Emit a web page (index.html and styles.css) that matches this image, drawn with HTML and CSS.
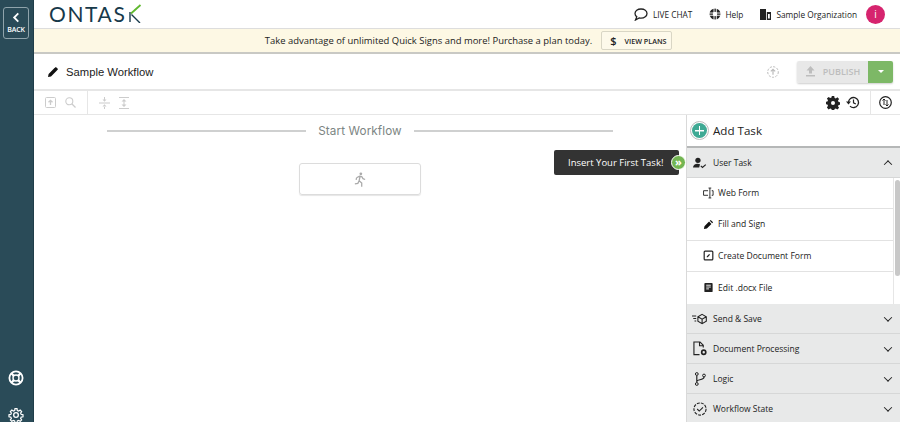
FILE: index.html
```html
<!DOCTYPE html>
<html lang="en">
<head>
<meta charset="utf-8">
<title>Ontask Workflow</title>
<link rel="stylesheet" href="styles.css">
</head>
<body>
<div class="app">
  <aside class="sidebar">
    <a class="back">
      <svg width="10" height="11" viewBox="0 0 10 12"><path d="M7.500 1.500 3 6l4.500 4.500" fill="none" stroke="#fff" stroke-width="2"/></svg>
      <span>BACK</span>
    </a>
    <div class="side-bottom">
      <svg width="16" height="16" viewBox="0 0 16 16"><circle cx="8" cy="8" r="6.600" fill="none" stroke="#fff" stroke-width="1.800"/><circle cx="8" cy="8" r="3" fill="none" stroke="#fff" stroke-width="1.400"/><path d="M3.300 3.300 5.900 5.900M12.700 3.300 10.100 5.900M3.300 12.700 5.900 10.100M12.700 12.700 10.100 10.100" stroke="#fff" stroke-width="2.200"/></svg>
      <svg width="16" height="16" viewBox="0 0 24 24"><circle cx="12" cy="12" r="3.500" fill="none" stroke="#fff" stroke-width="2"/><path d="M10.300 1.500h3.400l.5 3 2.200 1 2.600-1.700 2.400 2.400-1.700 2.600 1 2.200 3 .5v3.400l-3 .5-1 2.200 1.700 2.600-2.400 2.400-2.600-1.700-2.200 1-.5 3h-3.400l-.5-3-2.200-1-2.600 1.700-2.400-2.400 1.700-2.600-1-2.200-3-.5v-3.400l3-.5 1-2.200-1.700-2.600 2.400-2.400 2.600 1.700 2.200-1Z" fill="none" stroke="#fff" stroke-width="2" transform="translate(1.200 1.200) scale(.9)"/></svg>
    </div>
  </aside>
  <div class="main">
    <header class="topbar">
      <div class="logo"><span class="logo-text">ONTAS</span><svg class="logo-k" width="14" height="19" viewBox="0 0 14 19"><path d="M1 8v10M2.500 10.500 11 19" fill="none" stroke="#17394a" stroke-width="1.400"/><path d="M2 9.500 11.500 1" fill="none" stroke="#5fb82e" stroke-width="1.800"/></svg></div>
      <nav class="top-nav">
        <span class="nav-item">
          <svg width="14" height="13" viewBox="0 0 14 13"><path d="M7 1C3.600 1 1 3 1 5.500c0 1.300.7 2.400 1.800 3.200L1.500 12l3.700-2c.6.100 1.200.2 1.800.2 3.400 0 6-2.100 6-4.700S10.400 1 7 1Z" fill="none" stroke="#222" stroke-width="1.300"/></svg>
          LIVE CHAT</span>
        <span class="nav-item nav-help">
          <svg width="12" height="12" viewBox="0 0 12 12"><circle cx="6" cy="6" r="5.500" fill="#222"/><circle cx="6" cy="6" r="2.200" fill="#fff"/><path d="M0 4.500h12v1H0zM0 6.800h12v1H0zM4.500 0h1v12h-1zM6.800 0h1v12h-1z" fill="#fff" opacity=".9"/></svg>
          Help</span>
        <span class="nav-item nav-org">
          <svg width="11" height="11" viewBox="0 0 11 11"><path d="M0 0h6v11H0zM6.800 3H11v8H6.800z" fill="#222"/><path d="M8 5h1.800v4.500H8z" fill="#fff"/></svg>
          Sample Organization</span>
        <span class="avatar">i</span>
      </nav>
    </header>
    <div class="banner">
      <span>Take advantage of unlimited Quick Signs and more! Purchase a plan today.</span>
      <a class="plans"><span class="dollar">$</span>VIEW PLANS</a>
    </div>
    <div class="titlebar">
      <svg width="10" height="10" viewBox="0 0 10 10"><path d="M0 10l.6-3L6.500 1.100l2.400 2.400L3 9.400ZM7.200.4l.7-.4L10 2.100l-.4.700-.8.800-2.400-2.400Z" fill="#111"/></svg>
      <span class="wf-name">Sample Workflow</span>
      <svg class="wf-add" width="12" height="12" viewBox="0 0 12 12"><circle cx="6" cy="6" r="5.300" fill="none" stroke="#bbb" stroke-dasharray="2.200 1.300"/><path d="M6 3.300v5.400M3.800 5.400 6 3.300l2.200 2.100" fill="none" stroke="#bbb" stroke-width="1.200"/></svg>
      <div class="publish">
        <span class="pub-main">
          <svg width="11" height="11" viewBox="0 0 11 11"><path d="M5.500 0 9.500 4.500H7v3H4v-3H1.500ZM1 9h9v1.500H1Z" fill="#bdbdbd"/></svg>
          PUBLISH</span>
        <span class="pub-caret"></span>
      </div>
    </div>
    <div class="toolbar">
      <div class="tool-group">
        <svg width="11" height="11" viewBox="0 0 11 11"><rect x=".5" y=".5" width="10" height="10" rx="1" fill="none" stroke="#ccc"/><path d="M5.500 8V3.500M3.500 5.300l2-2 2 2" fill="none" stroke="#ccc" stroke-width="1.300"/></svg>
        <svg width="11" height="11" viewBox="0 0 11 11"><circle cx="4.300" cy="4.300" r="3.500" fill="none" stroke="#ccc" stroke-width="1.100"/><path d="M7 7l3.500 3.500" stroke="#ccc" stroke-width="1.300"/></svg>
      </div>
      <div class="tool-group tool-group2">
        <svg width="11" height="12" viewBox="0 0 11 12"><path d="M0 5.500h11v1H0zM3.500 2.500h4l-2 2.200zM5 0h1v3H5zM3.500 9.500h4l-2-2.200zM5 9h1v3H5z" fill="#ccc"/></svg>
        <svg width="10" height="12" viewBox="0 0 10 12"><path d="M0 0h10v1H0zM0 11h10v1H0zM5 2 7.500 4.500h-2v3h2L5 10 2.500 7.500h2v-3h-2Z" fill="#ccc"/></svg>
      </div>
      <div class="tool-right">
        <svg width="14" height="14" viewBox="0 0 14 14"><path d="M5.800 0h2.400l.3 1.800 1.300.6 1.600-1.100 1.700 1.700-1.100 1.600.6 1.300 1.800.3v2.400l-1.800.3-.6 1.300 1.100 1.600-1.700 1.700-1.600-1.100-1.300.6-.3 1.800H5.800l-.3-1.800-1.300-.6-1.600 1.100L.9 11.400 2 9.800l-.6-1.300L-.4 8.200V5.800l1.800-.3.600-1.300L.9 2.600l1.700-1.700 1.600 1.100 1.300-.6Z" fill="#222"/><circle cx="7" cy="7" r="2" fill="#fff"/></svg>
        <svg class="t-hist" width="14" height="13" viewBox="0 0 14 13"><path d="M2.500 6.500a5 5 0 1 1 1.500 3.600" fill="none" stroke="#222" stroke-width="1.300"/><path d="M0 5.500h5L2.500 8.500Z" fill="#222"/><path d="M7.500 3.500v3.300l2.300 1.200" fill="none" stroke="#222" stroke-width="1.200"/></svg>
        <span class="t-sep"></span>
        <svg width="13" height="13" viewBox="0 0 13 13"><circle cx="6.500" cy="6.500" r="5.800" fill="none" stroke="#222" stroke-width="1.200"/><path d="M5 3v6M3.500 4.500 5 3l1.500 1.500M8 10V4M6.500 8.500 8 10l1.500-1.500" fill="none" stroke="#222"/></svg>
      </div>
    </div>
    <div class="workspace">
      <section class="canvas">
        <div class="start-row"><span class="line"></span><span class="start-label">Start Workflow</span><span class="line"></span></div>
        <div class="start-box">
          <svg width="12" height="15" viewBox="0 0 14 17"><circle cx="8" cy="1.800" r="1.600" fill="#aaa"/><path d="M3 6.500 6.500 4.500 9 5l1.500 2.500 2.500 1M7 5 6 10l3 2.500V17M6 10l-1.500 3L1 13.500M3 6.500 2.500 9" fill="none" stroke="#aaa" stroke-width="1.500"/></svg>
        </div>
        <div class="hint">Insert Your First Task!<span class="hint-dot">»</span></div>
      </section>
      <aside class="panel">
        <div class="panel-head"><span class="add-ring"><span class="add-btn"></span></span>Add Task</div>
        <div class="group">
          <svg width="14" height="12" viewBox="0 0 17 13"><circle cx="6" cy="3.300" r="3.200" fill="#222"/><path d="M0 12c0-3 2.500-4.700 5.500-4.700 1.200 0 2.200.2 3 .7L7.500 12Z" fill="#222"/><path d="M9.500 10l2 2 4-3.500" fill="none" stroke="#222" stroke-width="1.500"/></svg>
          <span class="group-name">User Task</span><span class="chev up"></span>
        </div>
        <div class="items">
          <div class="item-list">
            <div class="item"><svg width="11" height="12" viewBox="0 0 12 12"><path d="M5.500 3.500H.6v5h4.900M9.500 3.500H11v5H9.500M6 .6h3M6 11.400h3M7.500.6v10.800" fill="none" stroke="#222"/></svg>Web Form</div>
            <div class="item"><svg width="11" height="11" viewBox="0 0 12 12"><path d="M1 11l.6-3.200 5-5 2.600 2.600-5 5ZM7.400 2l1-1 2.600 2.600-1 1Z" fill="#111"/></svg>Fill and Sign</div>
            <div class="item"><svg width="11" height="11" viewBox="0 0 12 12"><rect x="1.300" y="1.300" width="9.400" height="9.400" rx="1" fill="none" stroke="#222" stroke-width="1.300"/><path d="M4 8l.2-1.200 2.500-2.500 1 1L5.200 7.800Z" fill="#222"/></svg>Create Document Form</div>
            <div class="item"><svg width="11" height="11" viewBox="0 0 12 12"><rect x="1.500" y="1" width="9" height="10" rx="1" fill="#222"/><path d="M3.500 3.500h5M3.500 5.500h5M3.500 7.500h3" stroke="#fff"/></svg>Edit .docx File</div>
          </div>
          <div class="scroll"><span class="thumb"></span></div>
        </div>
        <div class="group">
          <svg width="16" height="12" viewBox="0 0 19 13"><path d="M0 3h5M1.500 6h3.500M3 9h2" stroke="#222" stroke-width="1.200"/><path d="M12 1 17 3.800V9.200L12 12 7 9.200V3.800ZM7 3.800l5 2.900 5-2.900M12 6.700V12" fill="none" stroke="#222" stroke-width="1.300"/></svg>
          <span class="group-name">Send &amp; Save</span><span class="chev"></span>
        </div>
        <div class="group">
          <svg width="14" height="15" viewBox="0 0 15 16"><path d="M7 14.500H1V1h6.500L11 4.500V7M7 1v4h4" fill="none" stroke="#222" stroke-width="1.200"/><circle cx="11.500" cy="12" r="2.200" fill="none" stroke="#222" stroke-width="1.800"/></svg>
          <span class="group-name">Document Processing</span><span class="chev"></span>
        </div>
        <div class="group">
          <svg width="12" height="14" viewBox="0 0 12 14"><circle cx="2.800" cy="2" r="1.400" fill="none" stroke="#222"/><circle cx="2.800" cy="12" r="1.400" fill="none" stroke="#222"/><circle cx="10" cy="3.500" r="1.400" fill="none" stroke="#222"/><path d="M2.800 3.400v7.200M2.800 9.500c0-2.500 7.200-1 7.200-4.600" fill="none" stroke="#222" stroke-width="1.200"/></svg>
          <span class="group-name">Logic</span><span class="chev"></span>
        </div>
        <div class="group">
          <svg width="14" height="14" viewBox="0 0 15 15"><circle cx="7.500" cy="7.500" r="6.500" fill="none" stroke="#222" stroke-width="1.200" stroke-dasharray="3.200 1.200"/><path d="M4.500 7.500l2.200 2.200 4-4" fill="none" stroke="#222" stroke-width="1.200"/></svg>
          <span class="group-name">Workflow State</span><span class="chev"></span>
        </div>
      </aside>
    </div>
  </div>
</div>
</body>
</html>
```
FILE: styles.css
```css
* { box-sizing: border-box; }
html, body { margin: 0; height: 100%; overflow: hidden; }
body { font-family: "Open Sans", "Liberation Sans", sans-serif; color: #222; background: #fff; }
svg { display: block; flex: none; }

.app { display: flex; height: 422px; }
.sidebar { width: 34px; flex: none; background: #2a4b58; display: flex; flex-direction: column; justify-content: space-between; align-items: center; padding: 7px 0 0 0; overflow: hidden; border-right: 1px solid #1f3d49; }
.back { width: 26px; height: 32px; border: 1px solid #8fa3ab; border-radius: 3px; color: #fff; font-size: 7px; font-weight: 600; display: flex; flex-direction: column; align-items: center; justify-content: center; gap: 2px; letter-spacing: -.2px; margin-right: 1px; }
.side-bottom { display: flex; flex-direction: column; align-items: center; gap: 21px; margin-bottom: -1px; margin-right: 2px; }

.main { flex: 1; min-width: 0; display: flex; flex-direction: column; }
.topbar { height: 29px; flex: none; display: flex; align-items: center; justify-content: space-between; padding: 0 15px 0 15px; border-bottom: 1px solid #ddd; }
.logo { display: flex; align-items: flex-start; color: #17394a; }
.logo-text { font-family: "Lato", sans-serif; font-weight: 400; font-size: 21px; line-height: 26px; letter-spacing: 1.600px; }
.logo-k { margin: 3px 0 0 3px; }
.top-nav { display: flex; align-items: center; font-size: 8.300px; }
.nav-item { display: flex; align-items: center; gap: 5px; }
.nav-help { margin-left: 17px; gap: 4px; }
.nav-org { margin-left: 17px; }
.avatar { width: 19px; height: 19px; border-radius: 50%; background: #d6246e; color: #fff; font-size: 10px; display: flex; align-items: center; justify-content: center; margin-left: 9px; }

.banner { height: 25px; flex: none; background: #fdf8e4; border-bottom: 2px solid #c9c9c4; display: flex; align-items: center; justify-content: center; font-size: 9.450px; gap: 9px; padding: 0 0 0 3px; }
.plans { height: 19px; width: 71px; background: #fdf9ea; border: 1px solid #d9d6c5; border-radius: 2px; font-size: 7.200px; font-weight: 600; display: flex; align-items: center; gap: 8px; padding-left: 8px; white-space: nowrap; }
.dollar { font-size: 11px; font-weight: 600; }

.titlebar { height: 37px; flex: none; display: flex; align-items: center; padding: 0 7px 0 14px; border-bottom: 2px solid #e6e6e6; }
.wf-name { font-family: "Liberation Sans", sans-serif; font-size: 11.250px; margin-left: 8px; flex: 1; }
.wf-add { margin-right: 18px; }
.publish { display: flex; height: 22px; border-radius: 2px; overflow: hidden; box-shadow: 0 1px 2px rgba(0,0,0,.2); }
.pub-main { width: 71px; background: #e8e8e8; color: #bdbdbd; font-size: 9px; font-weight: 600; display: flex; align-items: center; justify-content: center; gap: 7px; }
.pub-caret { width: 25px; background: #7db866; display: flex; align-items: center; justify-content: center; }
.pub-caret::before { content: ""; border-left: 3px solid transparent; border-right: 3px solid transparent; border-top: 3px solid #fff; }

.toolbar { height: 24px; flex: none; display: flex; align-items: center; border-bottom: 1px solid #e6e6e6; }
.tool-group { display: flex; align-items: center; gap: 9px; height: 100%; padding: 0 11px 0 11px; width: 54px; border-right: 1px solid #e6e6e6; }
.tool-group2 { border-right: 0; width: auto; gap: 9px; padding-left: 11px; }
.tool-right { margin-left: auto; display: flex; align-items: center; height: 100%; padding-right: 8px; }
.t-hist { margin-left: 6px; }
.t-sep { width: 1px; height: 100%; background: #e6e6e6; margin: 0 8px 0 10px; }

.workspace { flex: 1; min-height: 0; display: flex; }
.canvas { flex: 1; position: relative; padding: 0 0 0 73px; }
.start-row { width: 506px; display: flex; align-items: center; gap: 12px; margin-top: 6px; height: 20px; }
.line { flex: 1; height: 2px; background: #cfd0d0; }
.start-label { font-family: "Inter", sans-serif; font-size: 11.700px; color: #7c8583; letter-spacing: .1px; }
.start-box { width: 122px; height: 32px; margin: 22px 0 0 192px; border: 1px solid #dcdcdc; border-radius: 3px; box-shadow: 0 1px 1px rgba(0,0,0,.1); display: flex; align-items: center; justify-content: center; }
.hint { position: absolute; left: 520px; top: 35px; width: 125px; height: 25px; background: #333; color: #fff; font-size: 9.500px; border-radius: 2px; display: flex; align-items: center; padding-left: 14px; }
.hint-dot { position: absolute; right: -7px; top: 5px; width: 13px; height: 13px; border-radius: 50%; background: #73b552; border: 1px solid #fff; box-sizing: content-box; color: #fff; font-size: 11px; line-height: 11px; text-align: center; font-weight: 700; }

.panel { width: 214px; flex: none; border-left: 1px solid #d9d9d9; display: flex; flex-direction: column; }
.panel-head { height: 33px; flex: none; display: flex; align-items: center; gap: 4px; padding-left: 3px; border-bottom: 2px solid #b5b7b7; font-size: 11.600px; }
.add-ring { width: 19px; height: 19px; border-radius: 50%; border: 1px solid #bbb; padding: 1px; display: flex; }
.add-btn { flex: 1; border-radius: 50%; background: #3fa994 linear-gradient(#fff,#fff) center/9px 1.500px no-repeat; position: relative; }
.add-btn::after { content: ""; position: absolute; left: 6.750px; top: 3px; width: 1.500px; height: 9px; background: #fff; }
.group { height: 30px; flex: none; background: #e8e9e9; border-bottom: 1px solid #d6d7d7; display: grid; grid-template-columns: 22px 1fr auto; align-items: center; justify-items: center; font-size: 8.500px; padding: 0 7px 0 2px; column-gap: 2px; }
.group-name { justify-self: start; }
.chev { width: 6px; height: 6px; border-right: 1.500px solid #222; border-bottom: 1.500px solid #222; transform: rotate(45deg) translate(-1px,-1px); margin-right: 2px; }
.chev.up { transform: rotate(-135deg) translate(-1px,-1px); }
.items { height: 126px; flex: none; display: flex; }
.item-list { flex: 1; }
.item { height: 31.300px; display: flex; align-items: center; gap: 4px; padding-left: 16px; font-size: 8.550px; border-bottom: 1px solid #e2e2e2; }
.item:last-child { border-bottom: 0; }
.scroll { width: 7px; border-left: 1px solid #e6e6e6; padding-top: 2px; display: flex; justify-content: flex-end; }
.thumb { width: 5px; height: 96px; background: #c8c8c8; border-radius: 3px; }
```
